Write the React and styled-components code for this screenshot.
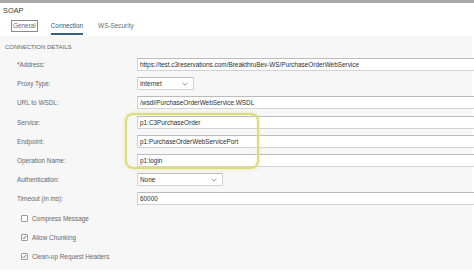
import styled, { createGlobalStyle } from "styled-components";

const GlobalStyle = createGlobalStyle`
  html, body {
    margin: 0;
    padding: 0;
    background: #ffffff;
    overflow: hidden;
  }
  body {
    font-family: "Liberation Sans", Arial, sans-serif;
    color: #32363a;
  }
`;

const Page = styled.div`
  width: 474px;
  height: 273px;
  display: flex;
  flex-direction: column;
`;

const TopBar = styled.div`
  height: 3px;
  background: #a9a9a9;
  flex-shrink: 0;
`;

const Title = styled.div`
  height: 15px;
  line-height: 15px;
  padding-left: 3px;
  font-size: 7.4px;
  color: #3a3d40;
`;

const Tabs = styled.div`
  height: 18px;
  display: flex;
  align-items: flex-start;
  gap: 15px;
  padding-left: 13px;
`;

const Tab = styled.div`
  padding-top: 3px;
  height: 12px;
  line-height: 10px;
  font-size: 6.4px;
  color: ${(p) => (p.$active ? "#2f5679" : "#6a6d70")};
  border-bottom: 2px solid ${(p) => (p.$active ? "#34608a" : "transparent")};

  span {
    display: inline-block;
    outline: ${(p) => (p.$focused ? "1px solid #8a8a8a" : "none")};
    padding: 0 1px;
    margin: 0 -1px;
  }
`;

const Section = styled.div`
  position: relative;
  width: 472px;
  height: 234px;
  background: #f7f7f7;
  display: flex;
  flex-direction: column;
`;

const SectionTitle = styled.div`
  padding: 7px 0 0 5px;
  height: 15px;
  line-height: 8px;
  font-size: 6px;
  color: #5f6366;
`;

const Form = styled.div`
  display: grid;
  grid-template-columns: 120px 1fr;
  grid-auto-rows: 13px;
  row-gap: 6.2px;
  padding-left: 17px;
`;

const Label = styled.div`
  font-size: 6.4px;
  line-height: 13px;
  color: #65686b;

  b {
    color: #d0332a;
    font-weight: normal;
  }
`;

const Field = styled.div`
  box-sizing: border-box;
  height: 13px;
  width: ${(p) => p.$width || "calc(100% + 4px)"};
  background: #ffffff;
  border: 1px solid #d2d2d2;
  border-top-color: #bcbcbc;
  padding-left: 2px;
  font-size: 6.4px;
  line-height: 11px;
  color: #2a2d30;
  white-space: nowrap;
  overflow: hidden;
  display: flex;
  align-items: center;
  justify-content: space-between;
`;

const Chevron = styled.svg`
  width: 6px;
  height: 4px;
  margin-right: 5px;
  flex-shrink: 0;
`;

const Checks = styled.div`
  display: flex;
  flex-direction: column;
  gap: 6.2px;
  margin-top: 6.2px;
  padding-left: 21px;
`;

const CheckRow = styled.div`
  height: 13px;
  display: flex;
  align-items: center;
  gap: 4px;
  font-size: 6.4px;
  color: #65686b;
`;

const Box = styled.div`
  box-sizing: border-box;
  width: 7px;
  height: 7px;
  background: #ffffff;
  border: 1px solid #9a9a9a;
  border-radius: 1px;
  display: flex;
  align-items: center;
  justify-content: center;
`;

const Highlight = styled.div`
  position: absolute;
  left: 125px;
  top: 77px;
  width: 134px;
  height: 56px;
  box-sizing: border-box;
  border: 2px solid #dcdc7c;
  border-radius: 8px;
  box-shadow: 0 0 3px 1px rgba(228, 228, 150, 0.55),
    inset 0 0 2px rgba(228, 228, 150, 0.55);
  pointer-events: none;
`;

function Select({ value, width }) {
  return (
    <Field $width={width}>
      <span>{value}</span>
      <Chevron viewBox="0 0 6 4">
        <polyline
          points="0.5,0.8 3,3.2 5.5,0.8"
          fill="none"
          stroke="#7a7d80"
          strokeWidth="0.8"
        />
      </Chevron>
    </Field>
  );
}

function Check({ checked, children }) {
  return (
    <CheckRow>
      <Box>
        {checked && (
          <svg width="5" height="5" viewBox="0 0 5 5">
            <polyline
              points="0.8,2.6 2,3.8 4.2,1"
              fill="none"
              stroke="#2b6aa8"
              strokeWidth="0.9"
            />
          </svg>
        )}
      </Box>
      {children}
    </CheckRow>
  );
}

export default function App() {
  return (
    <>
      <GlobalStyle />
      <Page>
        <TopBar />
        <Title>SOAP</Title>
        <Tabs>
          <Tab $focused>
            <span>General</span>
          </Tab>
          <Tab $active>
            <span>Connection</span>
          </Tab>
          <Tab>
            <span>WS-Security</span>
          </Tab>
        </Tabs>

        <Section>
          <SectionTitle>CONNECTION DETAILS</SectionTitle>
          <Form>
            <Label>
              <b>*</b>Address:
            </Label>
            <Field>
              https://test.c3reservations.com/BreakthruBev-WS/PurchaseOrderWebService
            </Field>

            <Label>Proxy Type:</Label>
            <Select value="Internet" width="57px" />

            <Label>URL to WSDL:</Label>
            <Field>/wsdl/PurchaseOrderWebService.WSDL</Field>

            <Label>Service:</Label>
            <Field>p1:C3PurchaseOrder</Field>

            <Label>Endpoint:</Label>
            <Field>p1:PurchaseOrderWebServicePort</Field>

            <Label>Operation Name:</Label>
            <Field>p1:login</Field>

            <Label>Authentication:</Label>
            <Select value="None" width="86px" />

            <Label>Timeout (in ms):</Label>
            <Field>60000</Field>
          </Form>

          <Checks>
            <Check>Compress Message</Check>
            <Check checked>Allow Chunking</Check>
            <Check checked>Clean-up Request Headers</Check>
          </Checks>

          <Highlight />
        </Section>
      </Page>
    </>
  );
}
